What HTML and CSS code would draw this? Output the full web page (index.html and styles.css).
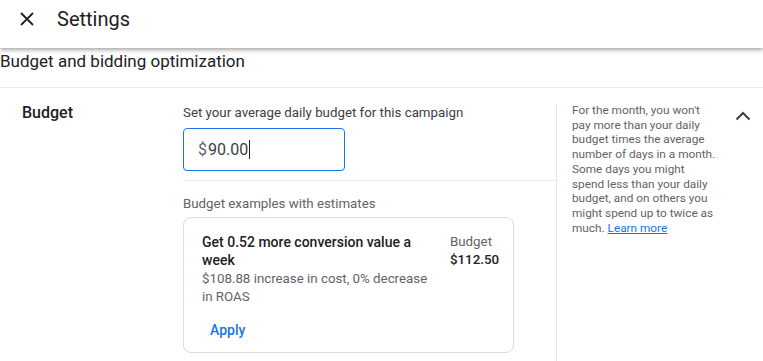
FILE: index.html
```html
<!DOCTYPE html>
<html>
<head>
<meta charset="utf-8">
<link rel="stylesheet" href="styles.css">
</head>
<body>
<header class="topbar">
  <svg class="close" width="14" height="14" viewBox="0 0 14 14"><path d="M1 1 L13 13 M13 1 L1 13" stroke="#202124" stroke-width="1.8" fill="none"/></svg>
  <span class="title">Settings</span>
</header>
<div class="section-title">Budget and bidding optimization</div>
<div class="row">
  <div class="label">Budget</div>
  <div class="main">
    <div class="prompt">Set your average daily budget for this campaign</div>
    <div class="input-wrap">
      <div class="input"><span class="cur">$</span>90.00<span class="caret"></span></div>
    </div>
    <div class="examples-title">Budget examples with estimates</div>
    <div class="card">
      <div class="card-body">
        <div class="card-left">
          <div class="headline">Get 0.52 more conversion value a week</div>
          <div class="sub">$108.88 increase in cost, 0% decrease in ROAS</div>
        </div>
        <div class="card-right">
          <div class="bl">Budget</div>
          <div class="bv">$112.50</div>
        </div>
      </div>
      <button class="apply">Apply</button>
    </div>
  </div>
  <div class="vline"></div>
  <div class="help">For the month, you won't<br>pay more than your daily<br>budget times the average<br>number of days in a month.<br>Some days you might<br>spend less than your daily<br>budget, and on others you<br>might spend up to twice as<br>much. <a href="#">Learn more</a></div>
  <div class="chev">
    <svg width="16" height="10" viewBox="0 0 16 10"><path d="M1.5 8.5 L8 2 L14.5 8.5" stroke="#3c4043" stroke-width="2" fill="none"/></svg>
  </div>
</div>
</body>
</html>
```

FILE: styles.css
```css
html, body { margin: 0; padding: 0; background: #fff; }
body { font-family: Roboto, "Noto Sans", Arial, sans-serif; color: #3c4043; width: 763px; height: 361px; overflow: hidden; }
.topbar { box-sizing: border-box; height: 48px; display: flex; align-items: flex-start; padding: 12px 0 0 20px; box-shadow: 0 2px 4px rgba(0,0,0,0.35); position: relative; z-index: 2; background: #fff; }
.close { display: block; }
.title { margin-left: 23px; font-size: 20px; line-height: 20px; color: #202124; margin-top: -3px; }
.section-title { box-sizing: border-box; font-size: 17px; color: #202124; padding-top: 3px; height: 40px; border-bottom: 1px solid #e8eaed; }
.row { display: flex; }
.label { width: 161px; padding: 15px 0 0 22px; font-size: 16px; font-weight: 500; color: #202124; }
.main { width: 373px; padding-top: 15px; }
.prompt { font-size: 13.3px; line-height: 20px; color: #3c4043; }
.input-wrap { padding: 5px 0 9px; border-bottom: 1px solid #e8eaed; }
.input { box-sizing: border-box; width: 162px; height: 43px; border: 1.5px solid #1a73e8; border-radius: 4px; padding-left: 14px; display: flex; align-items: center; font-size: 16px; color: #3c4043; }
.cur { color: #5f6368; margin-right: 1px; }
.caret { width: 1px; height: 19px; background: #202124; margin-left: 1px; }
.examples-title { font-size: 13.3px; line-height: 20px; margin-top: 13px; color: #5f6368; }
.card { box-sizing: border-box; width: 331px; height: 136px; border: 1px solid #dadce0; border-radius: 8px; margin-top: 3px; padding: 15px 0 8px 18px; }
.card-body { display: flex; }
.card-left { width: 232px; line-height: 18.3px; }
.headline { font-size: 14px; font-weight: 500; color: #202124; }
.sub { font-size: 13.3px; color: #5f6368; }
.card-right { margin-left: 16px; font-size: 13.3px; line-height: 18.3px; }
.bl { color: #5f6368; }
.bv { font-weight: 500; color: #202124; }
.apply { margin-top: 12px; background: none; border: none; padding: 4px 8px; font-family: inherit; font-size: 14px; font-weight: 500; color: #1a73e8; }
.vline { width: 1px; background: #e6e6e6; margin-top: 16px; height: 260px; }
.help { width: 150px; padding: 15px 0 0 15px; font-size: 11.8px; line-height: 14.7px; color: #5f6368; white-space: nowrap; }
.help a { color: #1a73e8; }
.chev { padding: 18px 0 0 13px; }
```
